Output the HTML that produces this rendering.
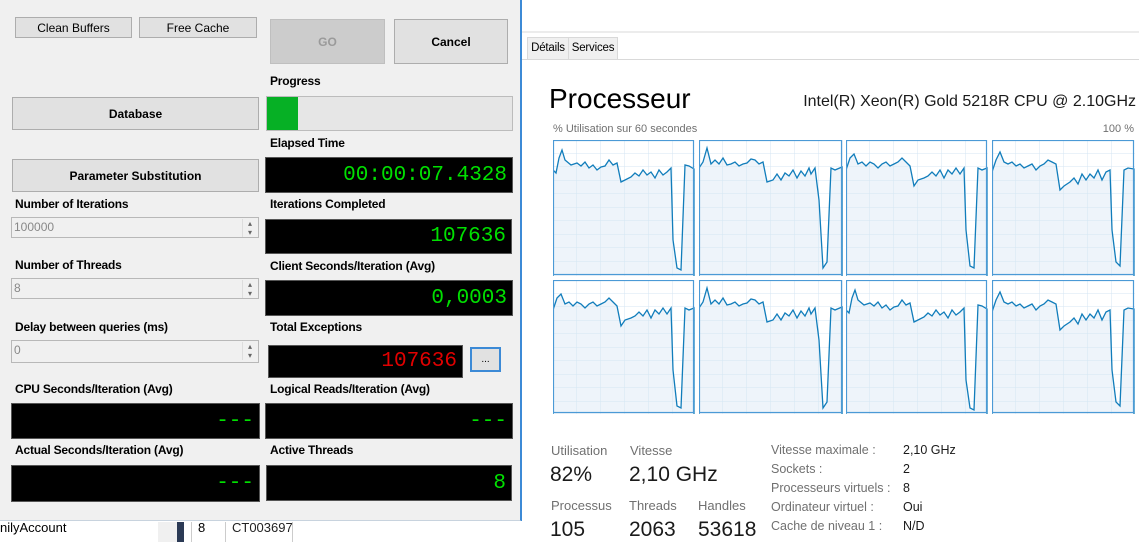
<!DOCTYPE html>
<html><head><meta charset="utf-8"><style>
*{margin:0;padding:0;box-sizing:border-box}
body{width:1139px;height:542px;position:relative;overflow:hidden;background:#fff;font-family:"Liberation Sans",sans-serif}
.a{position:absolute}
#dlg{left:0;top:0;width:521px;height:521px;background:#f0f0f0;border-right:1px solid #3c8ad6;border-bottom:1px solid #c8d3de}
.btn{position:absolute;background:#e1e1e1;border:1px solid #adadad;font-size:12px;color:#000;display:flex;align-items:center;justify-content:center}
.lbl{position:absolute;font-size:12px;font-weight:bold;color:#000;letter-spacing:-0.2px}
.blk{position:absolute;background:#000;border:1px solid #555;color:#00e000;font-family:"Liberation Mono",monospace;font-size:21px;text-align:right;padding-right:5px;display:flex;align-items:center;justify-content:flex-end}
.inp{position:absolute;background:#f0f0f0;border:1px solid #b8b8b8;font-size:12px;color:#888;padding-left:2px;line-height:19px}
.inp:after{content:"▴\A▾";white-space:pre;position:absolute;right:1px;top:1px;width:14px;font-size:8px;line-height:9px;text-align:center;border-left:1px solid #ddd;color:#666}
.s{position:absolute;font-size:13px;color:#707070}
.v{position:absolute;font-size:21px;color:#1a1a1a}
.k{position:absolute;font-size:12.5px;color:#707070}
.kv{position:absolute;font-size:12.5px;color:#1a1a1a}
.tab{position:absolute;top:37px;height:23px;background:#f0f0f0;border:1px solid #d9d9d9;font-size:11.5px;line-height:21px;text-align:center;letter-spacing:-0.2px;white-space:nowrap}
</style></head><body>
<div id="dlg" class="a">
<div class="btn" style="left:15px;top:17px;width:117px;height:21px">Clean Buffers</div>
<div class="btn" style="left:139px;top:17px;width:118px;height:21px">Free Cache</div>
<div class="btn" style="left:270px;top:19px;width:115px;height:45px;background:#cccccc;border-color:#bfbfbf;color:#9a9a9a;font-weight:bold">GO</div>
<div class="btn" style="left:394px;top:19px;width:114px;height:45px;font-weight:bold">Cancel</div>
<div class="lbl" style="left:270px;top:74px">Progress</div>
<div class="a" style="left:266px;top:96px;width:247px;height:35px;background:#e6e6e6;border:1px solid #bcbcbc"><div style="width:31px;height:33px;background:#06b025"></div></div>
<div class="btn" style="left:12px;top:97px;width:247px;height:33px;font-weight:bold">Database</div>
<div class="lbl" style="left:270px;top:136px">Elapsed Time</div>
<div class="blk" style="left:265px;top:157px;width:248px;height:36px">00:00:07.4328</div>
<div class="btn" style="left:12px;top:159px;width:247px;height:33px;font-weight:bold">Parameter Substitution</div>
<div class="lbl" style="left:15px;top:197px">Number of Iterations</div>
<div class="inp" style="left:11px;top:217px;width:248px;height:21px">100000</div>
<div class="lbl" style="left:270px;top:197px">Iterations Completed</div>
<div class="blk" style="left:265px;top:219px;width:247px;height:35px">107636</div>
<div class="lbl" style="left:15px;top:258px">Number of Threads</div>
<div class="inp" style="left:11px;top:278px;width:248px;height:21px">8</div>
<div class="lbl" style="left:270px;top:259px">Client Seconds/Iteration (Avg)</div>
<div class="blk" style="left:265px;top:280px;width:248px;height:36px">0,0003</div>
<div class="lbl" style="left:15px;top:320px">Delay between queries (ms)</div>
<div class="inp" style="left:11px;top:340px;width:248px;height:23px">0</div>
<div class="lbl" style="left:270px;top:320px">Total Exceptions</div>
<div class="blk" style="left:268px;top:345px;width:195px;height:33px;color:#e00000">107636</div>
<div class="btn" style="left:470px;top:347px;width:31px;height:25px;border:2px solid #3c8ad6;font-size:10px">...</div>
<div class="lbl" style="left:15px;top:382px">CPU Seconds/Iteration (Avg)</div>
<div class="blk" style="left:11px;top:403px;width:249px;height:36px">---</div>
<div class="lbl" style="left:270px;top:382px">Logical Reads/Iteration (Avg)</div>
<div class="blk" style="left:265px;top:403px;width:248px;height:36px">---</div>
<div class="lbl" style="left:15px;top:443px">Actual Seconds/Iteration (Avg)</div>
<div class="blk" style="left:11px;top:465px;width:249px;height:37px">---</div>
<div class="lbl" style="left:270px;top:443px">Active Threads</div>
<div class="blk" style="left:266px;top:465px;width:246px;height:36px">8</div>
</div>
<div class="a" style="left:0;top:520px;font-size:13px;color:#000">nilyAccount</div>
<div class="a" style="left:158px;top:522px;width:19px;height:20px;background:#f0f0f0"></div>
<div class="a" style="left:177px;top:522px;width:7px;height:20px;background:#2b3a55"></div>
<div class="a" style="left:191px;top:522px;width:102px;height:20px;border-left:1px solid #ccc;border-right:1px solid #ccc"></div>
<div class="a" style="left:225px;top:522px;width:1px;height:20px;background:#ccc"></div>
<div class="a" style="left:198px;top:520px;font-size:13px">8</div>
<div class="a" style="left:232px;top:520px;font-size:13px;color:#222">CT003697</div>

<div class="a" style="left:522px;top:31px;width:617px;height:2px;background:#ececec"></div>
<div class="tab" style="left:527px;width:42px">Détails</div>
<div class="tab" style="left:568px;width:50px">Services</div>
<div class="a" style="left:522px;top:59px;width:617px;height:1px;background:#d9d9d9"></div>
<div class="a" style="left:549px;top:83px;font-size:28px;color:#000">Processeur</div>
<div class="a" style="right:3px;top:93px;font-size:16px;color:#1a1a1a">Intel(R) Xeon(R) Gold 5218R CPU @ 2.10GHz</div>
<div class="a" style="left:553px;top:123px;font-size:11px;color:#707070">% Utilisation sur 60 secondes</div>
<div class="a" style="right:5px;top:123px;font-size:11px;color:#707070">100 %</div>

<svg class="a" style="left:0;top:0" width="1139" height="542">
<defs>
<pattern id="gr" width="24" height="13.5" patternUnits="userSpaceOnUse"><path d="M24 0V13.5M0 13.5H24" stroke="#d4e6f3" fill="none"/></pattern>
<path id="p1" d="M0 30L3 33L6 18L9 10L12 20L18 25L24 23L28 26L32 22L36 28L40 25L44 30L48 27L52 26L56 20L60 25L64 23L68 42L72 40L78 37L82 33L86 36L90 30L94 35L98 32L102 38L106 30L110 35L114 32L118 28L120 100L124 128L128 130L132 25L136 26L141 29L141 140L0 140Z"/>
<path id="p2" d="M0 28L4 22L8 8L12 24L16 20L20 24L24 18L28 25L32 24L36 22L40 26L44 24L48 23L52 19L56 20L60 24L64 22L68 42L74 40L78 34L82 40L86 33L90 36L94 30L98 38L102 31L106 36L110 28L112 34L116 28L120 60L124 128L128 122L132 28L136 30L143 27L143 140L0 140Z"/>
<path id="p3" d="M0 30L4 18L8 14L12 24L16 22L20 26L24 22L28 24L32 28L36 24L40 22L44 26L48 24L52 22L56 18L60 22L64 26L68 46L72 40L78 38L82 36L86 32L90 36L94 30L98 38L102 30L106 34L110 28L114 34L118 28L120 90L124 126L128 128L132 28L136 30L141 28L141 140L0 140Z"/>
<path id="p4" d="M0 32L4 20L8 12L12 22L16 24L20 22L24 26L28 24L32 28L36 26L40 24L44 30L48 26L52 24L56 20L60 22L64 24L68 50L72 46L78 42L82 38L86 44L90 34L94 40L98 34L102 38L106 30L110 40L114 32L118 30L120 90L124 122L128 126L132 30L136 28L142 29L142 140L0 140Z"/>
<g id="c1"><use href="#p1" fill="#eef4fa" stroke="none"/><rect width="150" height="140" fill="url(#gr)"/><use href="#p1" fill="none" stroke="#117dbb" stroke-width="1.3"/></g>
<g id="c2"><use href="#p2" fill="#eef4fa" stroke="none"/><rect width="150" height="140" fill="url(#gr)"/><use href="#p2" fill="none" stroke="#117dbb" stroke-width="1.3"/></g>
<g id="c3"><use href="#p3" fill="#eef4fa" stroke="none"/><rect width="150" height="140" fill="url(#gr)"/><use href="#p3" fill="none" stroke="#117dbb" stroke-width="1.3"/></g>
<g id="c4"><use href="#p4" fill="#eef4fa" stroke="none"/><rect width="150" height="140" fill="url(#gr)"/><use href="#p4" fill="none" stroke="#117dbb" stroke-width="1.3"/></g>
</defs>
<line x1="521.5" y1="0" x2="521.5" y2="521" stroke="#3c8ad6"/>
<svg x="553" y="140" width="142" height="136" overflow="hidden"><use href="#c1"/><rect x="0.5" y="0.5" width="140" height="134" fill="none" stroke="#4b9ad6" stroke-width="1.2"/></svg>
<svg x="699" y="140" width="144" height="136" overflow="hidden"><use href="#c2"/><rect x="0.5" y="0.5" width="142" height="134" fill="none" stroke="#4b9ad6" stroke-width="1.2"/></svg>
<svg x="846" y="140" width="142" height="136" overflow="hidden"><use href="#c3"/><rect x="0.5" y="0.5" width="140" height="134" fill="none" stroke="#4b9ad6" stroke-width="1.2"/></svg>
<svg x="992" y="140" width="143" height="136" overflow="hidden"><use href="#c4"/><rect x="0.5" y="0.5" width="141" height="134" fill="none" stroke="#4b9ad6" stroke-width="1.2"/></svg>
<svg x="553" y="280" width="142" height="134" overflow="hidden"><use href="#c3"/><rect x="0.5" y="0.5" width="140" height="132" fill="none" stroke="#4b9ad6" stroke-width="1.2"/></svg>
<svg x="699" y="280" width="144" height="134" overflow="hidden"><use href="#c2"/><rect x="0.5" y="0.5" width="142" height="132" fill="none" stroke="#4b9ad6" stroke-width="1.2"/></svg>
<svg x="846" y="280" width="142" height="134" overflow="hidden"><use href="#c1"/><rect x="0.5" y="0.5" width="140" height="132" fill="none" stroke="#4b9ad6" stroke-width="1.2"/></svg>
<svg x="992" y="280" width="143" height="134" overflow="hidden"><use href="#c4"/><rect x="0.5" y="0.5" width="141" height="132" fill="none" stroke="#4b9ad6" stroke-width="1.2"/></svg>
</svg>

<div class="s" style="left:551px;top:443px">Utilisation</div>
<div class="s" style="left:630px;top:443px">Vitesse</div>
<div class="v" style="left:550px;top:463px">82%</div>
<div class="v" style="left:629px;top:463px">2,10 GHz</div>
<div class="s" style="left:551px;top:498px">Processus</div>
<div class="s" style="left:629px;top:498px">Threads</div>
<div class="s" style="left:698px;top:498px">Handles</div>
<div class="v" style="left:550px;top:518px">105</div>
<div class="v" style="left:629px;top:518px">2063</div>
<div class="v" style="left:698px;top:518px">53618</div>
<div class="k" style="left:771px;top:443px">Vitesse maximale :</div>
<div class="k" style="left:771px;top:462px">Sockets :</div>
<div class="k" style="left:771px;top:481px">Processeurs virtuels :</div>
<div class="k" style="left:771px;top:500px">Ordinateur virtuel :</div>
<div class="k" style="left:771px;top:519px">Cache de niveau 1 :</div>
<div class="kv" style="left:903px;top:443px">2,10 GHz</div>
<div class="kv" style="left:903px;top:462px">2</div>
<div class="kv" style="left:903px;top:481px">8</div>
<div class="kv" style="left:903px;top:500px">Oui</div>
<div class="kv" style="left:903px;top:519px">N/D</div>
</body></html>
